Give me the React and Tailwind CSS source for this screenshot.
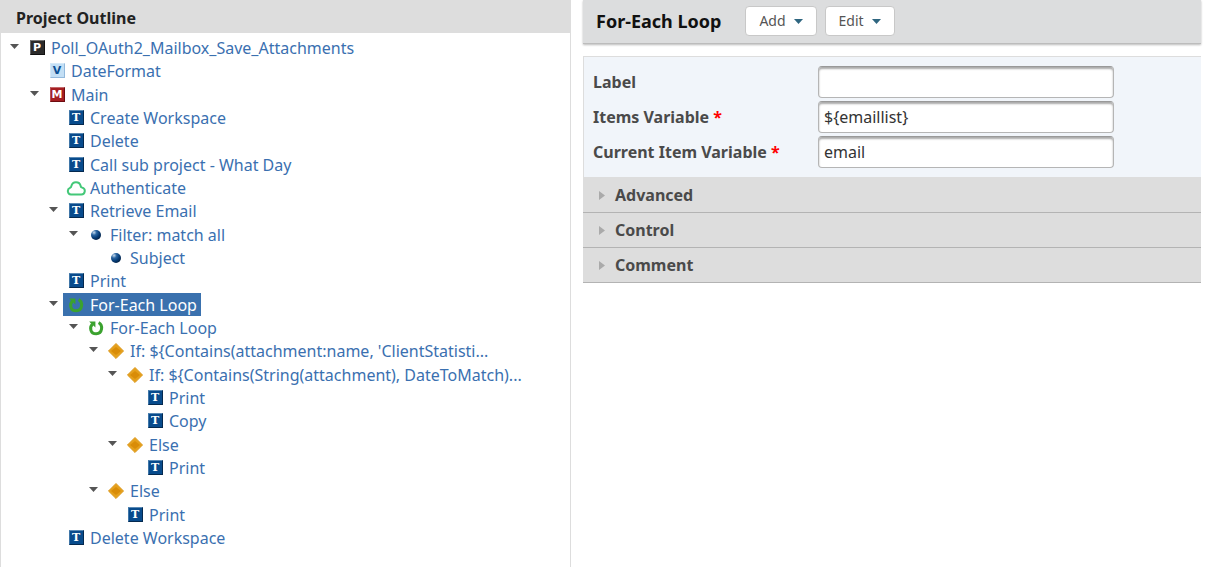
import { useState } from 'react';

const outline = [
    { level: 0, icon: 'P', label: 'Poll_OAuth2_Mailbox_Save_Attachments', open: true },
    { level: 1, icon: 'V', label: 'DateFormat' },
    { level: 1, icon: 'M', label: 'Main', open: true },
    { level: 2, icon: 'T', label: 'Create Workspace' },
    { level: 2, icon: 'T', label: 'Delete' },
    { level: 2, icon: 'T', label: 'Call sub project - What Day' },
    { level: 2, icon: 'cloud', label: 'Authenticate' },
    { level: 2, icon: 'T', label: 'Retrieve Email', open: true },
    { level: 3, icon: 'dot', label: 'Filter: match all', open: true },
    { level: 4, icon: 'dot', label: 'Subject' },
    { level: 2, icon: 'T', label: 'Print' },
    { level: 2, icon: 'loop', label: 'For-Each Loop', open: true },
    { level: 3, icon: 'loop', label: 'For-Each Loop', open: true },
    { level: 4, icon: 'diamond', label: "If: ${Contains(attachment:name, 'ClientStatisti...", open: true },
    { level: 5, icon: 'diamond', label: 'If: ${Contains(String(attachment), DateToMatch)...', open: true },
    { level: 6, icon: 'T', label: 'Print' },
    { level: 6, icon: 'T', label: 'Copy' },
    { level: 5, icon: 'diamond', label: 'Else', open: true },
    { level: 6, icon: 'T', label: 'Print' },
    { level: 4, icon: 'diamond', label: 'Else', open: true },
    { level: 5, icon: 'T', label: 'Print' },
    { level: 2, icon: 'T', label: 'Delete Workspace' },
];

const tiles = {
    P: "font-['DejaVu_Sans',sans-serif] bg-[#2b2b2b] border-t-[#777777] border-l-[#666666] border-r-[#111111] border-b-[#111111] text-white",
    V: "font-['DejaVu_Sans',sans-serif] bg-[#c3dff5] border-t-[#d5e9f8] border-l-[#d5e9f8] border-r-[#93b9dc] border-b-[#93b9dc] text-[#0b4f94]",
    M: "font-['DejaVu_Sans',sans-serif] bg-[#a51e22] border-t-[#c46a6c] border-l-[#b84e50] border-r-[#6d0c10] border-b-[#6d0c10] text-white",
    T: "font-['DejaVu_Serif',serif] bg-[#084b8c] border-t-[#5b8ab5] border-l-[#3f76a8] border-r-[#04294f] border-b-[#04294f] text-white",
};

const NodeIcon = ({ type }) => {
    if (type === 'cloud') {
        return (
            <svg viewBox="0 0 20 16" className="w-5 h-4" fill="none" stroke="#43c878" strokeWidth="2" strokeLinejoin="round" aria-hidden="true">
                <path d="M5 14.5h10.2a3.5 3.5 0 0 0 .9-6.9c-1.3-.3-1.4-.8-1.5-1.8a4.7 4.7 0 0 0-9.2.2c-.1 1-.3 1.4-1.4 1.8A3.5 3.5 0 0 0 5 14.5Z" />
            </svg>
        );
    }
    if (type === 'dot') {
        return (
            <svg viewBox="0 0 10 10" className="w-[10px] h-[10px]" aria-hidden="true">
                <defs>
                    <radialGradient id="ball" cx="0.3" cy="0.25" r="0.75">
                        <stop offset="0" stopColor="#c8dcee" />
                        <stop offset="0.35" stopColor="#2b66a2" />
                        <stop offset="0.7" stopColor="#073e79" />
                        <stop offset="1" stopColor="#04264e" />
                    </radialGradient>
                </defs>
                <circle cx="5" cy="5" r="5" fill="url(#ball)" />
            </svg>
        );
    }
    if (type === 'loop') {
        return (
            <svg viewBox="0 0 16 16" className="w-4 h-4" aria-hidden="true">
                <path d="M10.6 2.6C15.2 5 14.6 13.6 8.2 13.8 2.2 13.8 1.2 7 4.6 4.2" fill="none" stroke="#3ba22f" strokeWidth="3" />
                <path d="M1.2 1.4H7.4V7.4L5.6 5.8 3 3.6Z" fill="#3ba22f" />
            </svg>
        );
    }
    if (type === 'diamond') {
        return (
            <svg viewBox="0 0 16 16" className="w-4 h-4" aria-hidden="true">
                <path d="M8 .4 15.6 8 8 15.6.4 8Z" fill="#e5a01c" stroke="#d9951a" strokeWidth=".8" />
                <path d="M8 4 13 8 8 12 3 8Z" fill="#d98c08" />
            </svg>
        );
    }
    return (
        <span className={`flex items-center justify-center w-[15px] h-[15px] border font-bold text-[11px] leading-none ${tiles[type]}`}>
            {type}
        </span>
    );
};

const DownArrow = () => (
    <svg viewBox="0 0 9 5" className="w-[9px] h-[5px] fill-current" aria-hidden="true">
        <path d="M0 0H9L4.5 5Z" />
    </svg>
);

const OutlineRow = ({ node, selected, onSelect }) => (
    <li
        className="flex items-start h-[23px] nth-[3n+2]:h-6"
        style={{ paddingLeft: Math.round((node.level * 59) / 3) }}
    >
        <span className="flex justify-center w-[18px] ml-1 mr-px pt-2 shrink-0">
            {node.open && (
                <button type="button" aria-label={`Collapse ${node.label}`} className="text-[#555555] block">
                    <DownArrow />
                </button>
            )}
        </span>
        <a
            href="#node"
            onClick={onSelect}
            className={`flex items-center gap-1 h-[23px] pl-[3px] pr-1 whitespace-nowrap ${selected ? 'bg-[#3a71ae] text-white' : 'text-[#3a70b0]'}`}
        >
            <span className="flex items-center justify-center w-5 shrink-0">
                <NodeIcon type={node.icon} />
            </span>
            {node.label}
        </a>
    </li>
);

const MenuButton = ({ children }) => (
    <button
        type="button"
        className="flex items-center gap-2 h-[30px] px-[13px] bg-white border border-[#c8c8c8] rounded-[4px] text-sm text-[#555555]"
    >
        {children}
        <span className="text-[#2f6680]">
            <DownArrow />
        </span>
    </button>
);

const Field = ({ id, label, value = '', required }) => (
    <div className="flex items-center">
        <label htmlFor={id} className="w-[225px] shrink-0 font-bold text-[#4a4a4a]">
            {label}
            {required && <span className="text-[#ff0000]"> *</span>}
        </label>
        <input
            id={id}
            type="text"
            defaultValue={value}
            className="w-[296px] min-w-0 h-8 px-[5px] bg-white border border-[#b5b5b5] border-t-[#999999] rounded-[4px] shadow-[inset_0_2px_2px_#aaaaaa] text-[#333333]"
        />
    </div>
);

const Section = ({ title }) => (
    <button
        type="button"
        aria-expanded="false"
        className="flex items-center w-full h-[35px] pl-4 gap-[10px] bg-[#dddddd] border-b border-[#b3b3b3] font-bold text-[#4a4a4a] text-left"
    >
        <svg viewBox="0 0 6 9" className="w-[6px] h-[9px] fill-[#aaaaaa]" aria-hidden="true">
            <path d="M0 0 6 4.5 0 9Z" />
        </svg>
        {title}
    </button>
);

const App = () => {
    const [selected, setSelected] = useState(11);

    return (
        <div className="grid grid-cols-[571fr_618fr] gap-3 min-h-screen pr-[25px] pb-5 bg-white font-['Noto_Sans',sans-serif] text-base leading-5">
            {/* Project tree */}
            <nav className="border-x border-[#dddddd] min-w-0">
                <h2 className="flex items-center h-[33px] pl-[15px] pt-[2px] bg-[#dddddd] font-bold text-[#222222]">
                    Project Outline
                </h2>
                <ul className="pt-[3px]">
                    {outline.map((node, i) => (
                        <OutlineRow key={i} node={node} selected={i === selected} onSelect={() => setSelected(i)} />
                    ))}
                </ul>
            </nav>

            {/* Properties of the selected step */}
            <main className="min-w-0">
                <header className="flex items-center gap-2 h-11 pl-[13px] pb-px bg-[#dcddde] border-b border-[#bcbcbc] shadow-[0_1px_2px_#bbbbbb]">
                    <h1 className="mr-4 text-lg leading-5 font-bold text-[#111111]">For-Each Loop</h1>
                    <MenuButton>Add</MenuButton>
                    <MenuButton>Edit</MenuButton>
                </header>

                <form className="flex flex-col gap-[3px] mt-3 pt-[9px] pb-[9px] pl-[9px] bg-[#f1f5fa] border-y border-l border-[#dddddd]">
                    <Field id="label" label="Label" />
                    <Field id="items" label="Items Variable" value="${emaillist}" required />
                    <Field id="current" label="Current Item Variable" value="email" required />
                </form>

                <Section title="Advanced" />
                <Section title="Control" />
                <Section title="Comment" />
            </main>
        </div>
    );
};

export default App;
